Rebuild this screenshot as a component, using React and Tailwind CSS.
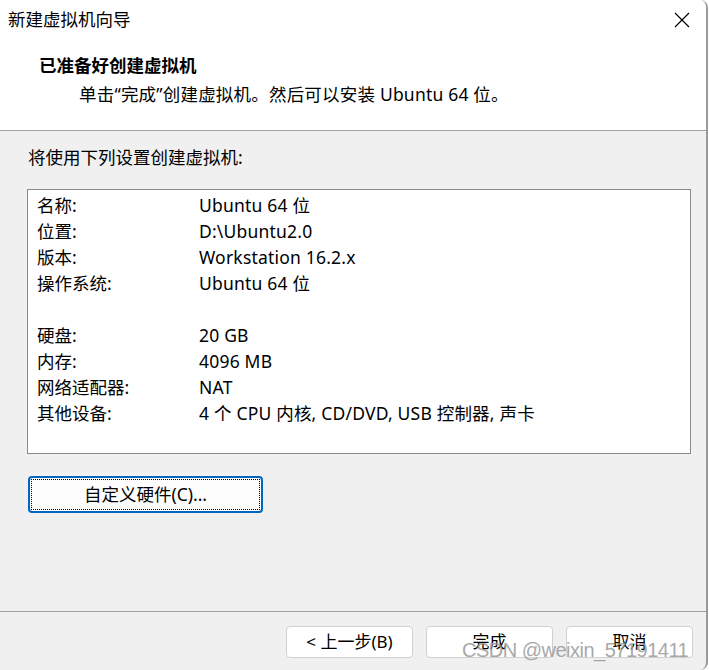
import React from "react";

const font = { fontFamily: '"Noto Sans", "Noto Sans CJK SC", sans-serif' };

const rows = [
  ["名称:", "Ubuntu 64 位"],
  ["位置:", "D:\\Ubuntu2.0"],
  ["版本:", "Workstation 16.2.x"],
  ["操作系统:", "Ubuntu 64 位"],
  null,
  ["硬盘:", "20 GB"],
  ["内存:", "4096 MB"],
  ["网络适配器:", "NAT"],
  ["其他设备:", "4 个 CPU 内核, CD/DVD, USB 控制器, 声卡"],
];

function Btn({ children }) {
  return (
    <div className="w-[127px] h-[32px] bg-white border border-[#d0d0d0] rounded-[4px] flex items-center justify-center text-[17px] text-black">
      {children}
    </div>
  );
}

export default function App() {
  return (
    <div className="w-[709px] h-[670px] bg-white relative overflow-hidden" style={font}>
      <div className="w-[708px] h-[670px] flex flex-col bg-[#f0f0f0] border-r-[2px] border-[#9a9a9a] rounded-tr-[8px] rounded-br-[8px] overflow-hidden">
        {/* Header */}
        <div className="bg-white h-[131px] border-b border-[#a0a0a0] flex flex-col">
          <div className="h-[40px] flex items-center justify-between pl-[8px] pr-[14px]">
            <span className="text-[17.5px] text-black leading-none">新建虚拟机向导</span>
            <svg width="16" height="16" viewBox="0 0 16 16" className="mr-[2px]">
              <path d="M1 1 L15 15 M15 1 L1 15" stroke="#000" strokeWidth="1.2" />
            </svg>
          </div>
          <div className="pl-[39px] pt-[17px] text-[17.5px] font-bold text-black leading-none">已准备好创建虚拟机</div>
          <div className="pl-[79px] pt-[11px] text-[17.5px] text-black leading-none tracking-[0.2px]">
            单击“完成”创建虚拟机。然后可以安装 Ubuntu 64 位。
          </div>
        </div>
        {/* Body */}
        <div className="flex-1 flex flex-col px-[27px]">
          <div className="pt-[14px] pl-[1px] text-[17.5px] text-black leading-[24px]">将使用下列设置创建虚拟机:</div>
          <div className="mt-[20px] w-[664px] h-[265px] bg-white border border-[#8a8a8a] pt-[2px] pl-[9px]">
            {rows.map((r, i) =>
              r ? (
                <div key={i} className="h-[26px] flex items-center text-[17.5px] text-black">
                  <span className="w-[162px]">{r[0]}</span>
                  <span className="tracking-[0.2px]">{r[1]}</span>
                </div>
              ) : (
                <div key={i} className="h-[26px]" />
              )
            )}
          </div>
          <div className="mt-[22px] ml-[1px] w-[235px] h-[37px] bg-[#fdfdfd] border-[2px] border-[#0067c0] rounded-[4px] p-[1px]">
            <div className="w-full h-full border border-dotted border-black flex items-center justify-center text-[17.5px] text-black">
              自定义硬件(C)...
            </div>
          </div>
        </div>
        {/* Footer */}
        <div className="h-[59px] border-t border-[#a0a0a0] flex justify-end items-start pt-[14px] pr-[13px] gap-[13px]">
          <Btn>&lt; 上一步(B)</Btn>
          <Btn>完成</Btn>
          <Btn>取消</Btn>
        </div>
      </div>
      <div
        className="absolute left-[462px] top-[640px] text-[20px] text-[#9a9a9a] leading-none tracking-[-0.5px]"
        style={{ fontFamily: '"Liberation Sans", Arial, sans-serif', opacity: 0.85 }}
      >
        CSDN @weixin_57191411
      </div>
    </div>
  );
}
